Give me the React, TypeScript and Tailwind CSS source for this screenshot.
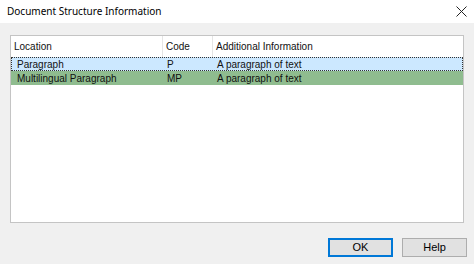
export default function App() {
  return (
    <div className="flex h-[264px] w-[474px] flex-col bg-[#f0f0f0] font-['Noto_Sans',sans-serif] text-black">
      <div className="flex h-[23px] items-center justify-between bg-white pl-[7px] pr-[7px]">
        <span className="text-[10px]">Document Structure Information</span>
        <svg width="11" height="11" viewBox="0 0 11 11" className="text-[#222]">
          <path d="M0.5 0.5 L10.5 10.5 M10.5 0.5 L0.5 10.5" stroke="currentColor" strokeWidth="1" />
        </svg>
      </div>
      <div className="px-[10px] pt-[12px]">
        <div className="flex h-[188px] flex-col border border-[#c4c4c4] bg-white font-['Liberation_Sans',sans-serif] text-[10px] text-[#111]">
          <div className="flex h-[21px] items-center">
            <div className="flex h-full w-[152px] items-center border-r border-[#e5e5e5] pl-[3px]">Location</div>
            <div className="flex h-full w-[50px] items-center border-r border-[#e5e5e5] pl-[3px]">Code</div>
            <div className="flex h-full flex-1 items-center pl-[3px]">Additional Information</div>
          </div>
          <div className="flex h-[14px] items-center border border-dotted border-[#333] bg-[#cce8ff]">
            <div className="w-[152px] pl-[5px]">Paragraph</div>
            <div className="w-[50px] pl-[3px]">P</div>
            <div className="flex-1 pl-[3px]">A paragraph of text</div>
          </div>
          <div className="flex h-[14px] items-center bg-[#8fbc8f]">
            <div className="w-[153px] pl-[6px]">Multilingual Paragraph</div>
            <div className="w-[50px] pl-[3px]">MP</div>
            <div className="flex-1 pl-[3px]">A paragraph of text</div>
          </div>
        </div>
      </div>
      <div className="mt-[15px] flex justify-end gap-[9px] pr-[7px] font-['Liberation_Sans',sans-serif] text-[11px]">
        <button className="flex h-[19px] w-[65px] items-center justify-center border-2 border-[#0078d7] bg-[#e1e1e1]">OK</button>
        <button className="flex h-[19px] w-[65px] items-center justify-center border border-[#adadad] bg-[#e1e1e1]">Help</button>
      </div>
    </div>
  );
}
